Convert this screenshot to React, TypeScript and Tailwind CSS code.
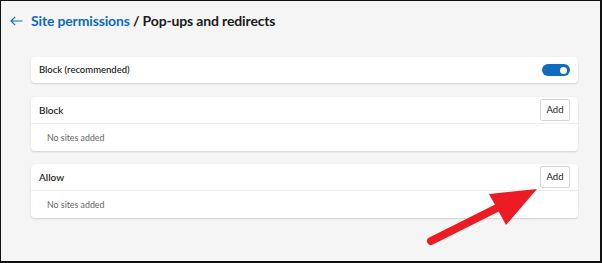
import React from "react";

function AddButton() {
  return (
    <button className="w-[30px] h-[22px] border border-[#d6d6d6] rounded-[2px] bg-white text-[9.5px] text-[#222] leading-none flex items-center justify-center">
      Add
    </button>
  );
}

function ListCard({ title }: { title: string }) {
  return (
    <div className="bg-white rounded-[4px] shadow-[0_1px_2px_rgba(0,0,0,0.14),0_0_1px_rgba(0,0,0,0.08)]">
      <div className="h-[26px] flex items-center justify-between pl-[8px] pr-[8px]">
        <span className="text-[10px] font-medium text-[#111]">{title}</span>
        <AddButton />
      </div>
      <div className="h-[28px] border-t border-[#ececec] flex items-center pl-[16px]">
        <span className="text-[8.8px] text-[#666]">No sites added</span>
      </div>
    </div>
  );
}

export default function App() {
  return (
    <div
      className="relative w-[602px] h-[263px] overflow-hidden bg-[#f5f5f5] border-[#111] border-t border-l border-r-2 border-b-2"
      style={{ fontFamily: 'Lato, "Open Sans", sans-serif' }}
    >
      <div className="flex items-center h-[20px] mt-[10px] pl-[9px]">
        <svg width="13" height="10" viewBox="0 0 13 10" className="mr-[8px]">
          <path d="M12.5 5H1.2M5.2 0.8L1 5l4.2 4.2" fill="none" stroke="#0f6cbd" strokeWidth="1.1" />
        </svg>
        <span className="text-[14px] font-bold tracking-[-0.15px] text-[#1b1b1b] leading-[20px]">
          <span className="text-[#0f6cbd]">Site permissions</span> / Pop-ups and redirects
        </span>
      </div>

      <div className="ml-[30px] w-[547px] mt-[26px] flex flex-col">
        <div className="h-[26px] bg-white rounded-[4px] shadow-[0_1px_2px_rgba(0,0,0,0.14),0_0_1px_rgba(0,0,0,0.08)] flex items-center justify-between pl-[8px] pr-[8px]">
          <span className="text-[9.5px] font-medium text-[#111]">Block (recommended)</span>
          <div className="w-[28px] h-[12px] rounded-full bg-[#0f6cbd] flex items-center justify-end pr-[3px]">
            <div className="w-[7px] h-[7px] rounded-full bg-white" />
          </div>
        </div>
        <div className="mt-[14px]">
          <ListCard title="Block" />
        </div>
        <div className="mt-[13px]">
          <ListCard title="Allow" />
        </div>
      </div>

      <svg
        className="absolute left-0 top-0 pointer-events-none"
        width="602"
        height="263"
        viewBox="0 0 602 263"
      >
        <line x1="430" y1="240" x2="500" y2="205" stroke="#ed1c24" strokeWidth="8" strokeLinecap="round" />
        <polygon points="536,188 488,193 505,224" fill="#ed1c24" />
      </svg>
    </div>
  );
}
